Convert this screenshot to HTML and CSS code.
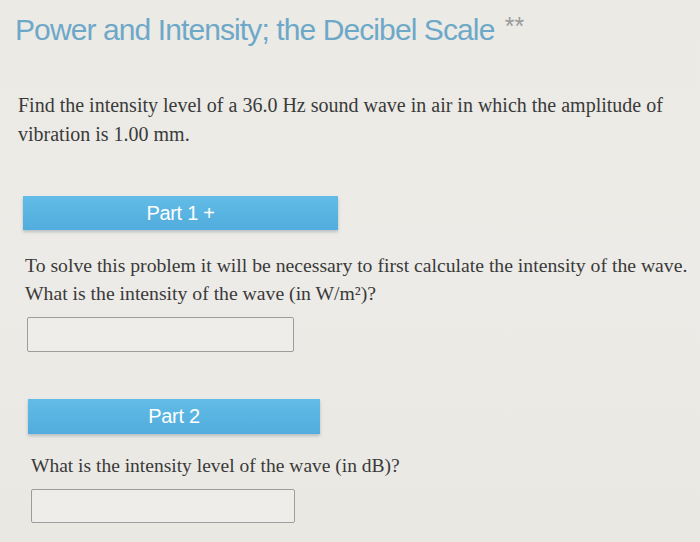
FILE: index.html
```html
<!DOCTYPE html>
<html>
<head>
<meta charset="utf-8">
<link rel="stylesheet" href="styles.css">
</head>
<body>
<div class="page">
  <h1 class="title">Power and Intensity; the Decibel Scale <span class="stars">**</span></h1>
  <p class="intro">Find the intensity level of a 36.0 Hz sound wave in air in which the amplitude of vibration is 1.00 mm.</p>

  <section class="part part1">
    <div class="bar bar1">Part 1 +</div>
    <p class="q q1">To solve this problem it will be necessary to first calculate the intensity of the wave. What is the intensity of the wave (in W/m²)?</p>
    <div class="box box1"></div>
  </section>

  <section class="part part2">
    <div class="bar bar2">Part 2</div>
    <p class="q q2">What is the intensity level of the wave (in dB)?</p>
    <div class="box box2"></div>
  </section>
</div>
</body>
</html>
```
FILE: styles.css
```css
html, body {
  margin: 0;
  padding: 0;
}
body {
  width: 700px;
  height: 542px;
  overflow: hidden;
  background: linear-gradient(180deg, #ebeae5 0%, #ecebe7 50%, #e9e8e3 100%);
}
.page {
  display: flex;
  flex-direction: column;
  padding-top: 9px;
}
.title {
  margin: 0 0 0 15px;
  font-family: "Liberation Sans", Arial, sans-serif;
  font-weight: normal;
  font-size: 30px;
  line-height: 34px;
  color: #6ea8c8;
  letter-spacing: -0.9px;
}
.stars {
  font-size: 25px;
  color: #9a9a9a;
  vertical-align: 5px;
  margin-left: 3px;
  letter-spacing: 0;
}
.intro {
  margin: 44px 0 0 18px;
  width: 670px;
  font-family: "Liberation Serif", "Times New Roman", serif;
  font-size: 20px;
  line-height: 29px;
  color: #3a3a3a;
}
.part {
  display: flex;
  flex-direction: column;
}
.bar {
  height: 35px;
  display: flex;
  align-items: center;
  justify-content: center;
  color: #ffffff;
  font-family: "Liberation Sans", Arial, sans-serif;
  font-size: 20px;
  letter-spacing: -0.3px;
  background: linear-gradient(180deg, #62bce6 0%, #52acdd 100%);
  box-shadow: 0 2px 3px rgba(90, 110, 130, 0.35);
}
.bar1 {
  margin: 47px 0 0 23px;
  width: 315px;
  height: 34px;
}
.bar2 {
  margin: 0 0 0 28px;
  width: 292px;
}
.q {
  font-family: "Liberation Serif", "Times New Roman", serif;
  font-size: 19.7px;
  line-height: 28px;
  color: #3a3a3a;
}
.q1 {
  margin: 21px 0 0 25px;
  width: 675px;
}
.q2 {
  margin: 18px 0 0 31px;
  font-size: 19.5px;
}
.box {
  height: 33px;
  border: 1px solid #9d9d9d;
  border-radius: 2px;
  background: #eeede9;
}
.box1 {
  margin: 10px 0 47px 27px;
  width: 265px;
}
.box2 {
  margin: 9px 0 0 31px;
  width: 262px;
  height: 32px;
}
```
